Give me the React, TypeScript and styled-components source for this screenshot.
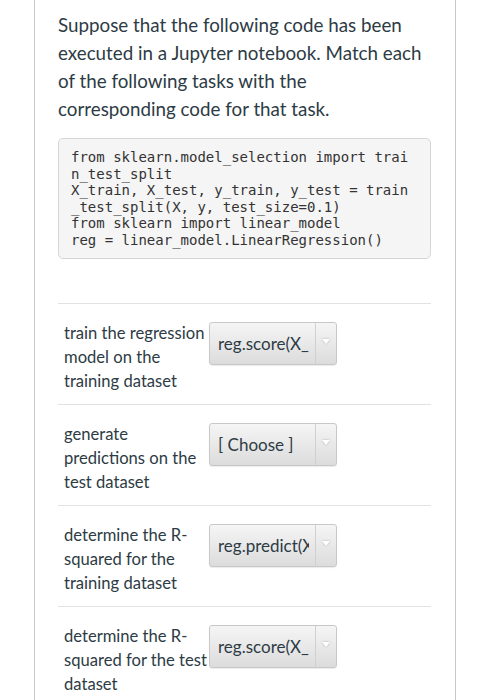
import styled, { createGlobalStyle } from "styled-components";

const GlobalStyle = createGlobalStyle`
  html, body {
    margin: 0;
    padding: 0;
    background: #fff;
  }
  body {
    font-family: Lato, "Open Sans", sans-serif;
    color: #2d3b45;
  }
`;

const Panel = styled.div`
  margin-left: 34px;
  width: 373px;
  min-height: 700px;
  padding: 11px 24px 0 23px;
  border-left: 1px solid #c9c9c9;
  border-right: 1px solid #c9c9c9;
`;

const Prompt = styled.p`
  margin: 0;
  max-width: 367px;
  font-size: 18.8px;
  line-height: 28px;
  color: #2d3b45;
`;

const CodeBlock = styled.pre`
  margin: 15px 0 0;
  padding: 10px 12px;
  background: #f5f5f5;
  border: 1px solid #d6d6d6;
  border-radius: 5px;
  font-family: "DejaVu Sans Mono", "Liberation Mono", monospace;
  font-size: 14px;
  line-height: 16.5px;
  color: #333;
  white-space: pre;
  overflow: hidden;
`;

const Divider = styled.div`
  margin-top: 44px;
  border-top: 1px solid #e2e2e2;
`;

const Row = styled.div`
  display: flex;
  align-items: flex-start;
  padding: 17px 0 11px 6px;
  border-bottom: 1px solid #e2e2e2;

  &:last-child {
    border-bottom: none;
  }
`;

const Label = styled.div`
  width: 145px;
  flex-shrink: 0;
  font-size: 16.6px;
  line-height: 24px;
  color: #2d3b45;
`;

const Select = styled.div`
  display: flex;
  width: 128px;
  height: 43px;
  margin-top: 1px;
  box-sizing: border-box;
  border: 1px solid #c8c8c8;
  border-radius: 3px;
  background: linear-gradient(#f5f5f5, #dcdcdc);
  box-shadow: 0 1px 1px rgba(0, 0, 0, 0.08);
`;

const SelectValue = styled.div`
  flex: 1;
  min-width: 0;
  margin: 0 6px 0 8px;
  font-size: 17px;
  line-height: 41px;
  color: #2d3b45;
  white-space: nowrap;
  overflow: hidden;
`;

const Arrow = styled.div`
  width: 21px;
  flex-shrink: 0;
  display: flex;
  justify-content: center;
  padding-top: 16px;
  box-sizing: border-box;
  border-left: 1px solid #d0d0d0;

  &::after {
    content: "";
    width: 0;
    height: 0;
    border-left: 4px solid transparent;
    border-right: 4px solid transparent;
    border-top: 5px solid #fff;
    filter: drop-shadow(0 0 1px rgba(0, 0, 0, 0.25));
  }
`;

const code = [
  "from sklearn.model_selection import trai",
  "n_test_split",
  "X_train, X_test, y_train, y_test = train",
  "_test_split(X, y, test_size=0.1)",
  "from sklearn import linear_model",
  "reg = linear_model.LinearRegression()",
].join("\n");

const matches = [
  { label: <>train the regression<br />model on the<br />training dataset</>, answer: "reg.score(X_" },
  { label: <>generate<br />predictions on the<br />test dataset</>, answer: "[ Choose ]" },
  { label: <>determine the R-<br />squared for the<br />training dataset</>, answer: "reg.predict(X_test)" },
  { label: <>determine the R-<br />squared for the test<br />dataset</>, answer: "reg.score(X_" },
];

export default function App() {
  return (
    <>
      <GlobalStyle />
      <Panel>
        <Prompt>
          Suppose that the following code has been executed in a Jupyter notebook. Match each of the following tasks
          with the corresponding code for that task.
        </Prompt>
        <CodeBlock>{code}</CodeBlock>
        <Divider />
        {matches.map((m, i) => (
          <Row key={i}>
            <Label>{m.label}</Label>
            <Select>
              <SelectValue>{m.answer}</SelectValue>
              <Arrow />
            </Select>
          </Row>
        ))}
      </Panel>
    </>
  );
}
